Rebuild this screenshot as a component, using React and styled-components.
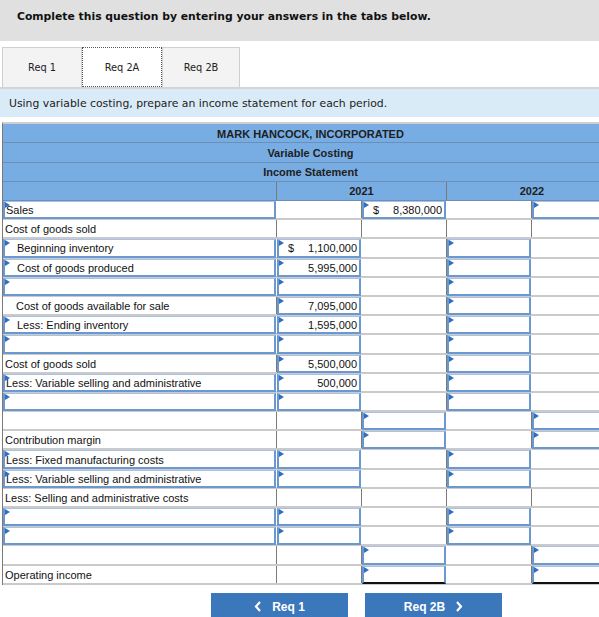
import React from "react";
import styled, { createGlobalStyle } from "styled-components";

const GlobalStyle = createGlobalStyle`
  html, body {
    margin: 0;
    padding: 0;
    background: #fff;
    overflow: hidden;
  }
  body {
    width: 599px;
    font-family: "Liberation Sans", Arial, sans-serif;
  }
`;

const Page = styled.div`
  width: 620px;
`;

const Banner = styled.div`
  height: 41px;
  width: 599px;
  background: #e0e0e0;
  display: flex;
  align-items: center;
  padding-left: 17px;
  box-sizing: border-box;
  font-family: "DejaVu Sans", Verdana, sans-serif;
  font-weight: bold;
  font-size: 10.8px;
  color: #111;
  padding-bottom: 8px;
`;

const Tabs = styled.div`
  display: flex;
  margin-top: 6px;
  padding-left: 2px;
  height: 40px;
`;

const Tab = styled.div`
  width: ${(p) => p.w}px;
  box-sizing: border-box;
  display: flex;
  align-items: center;
  justify-content: center;
  font-family: "DejaVu Sans", Verdana, sans-serif;
  font-size: 9.8px;
  color: #222;
  background: ${(p) => (p.active ? "#fff" : "#f3f3f3")};
  border: 1px ${(p) => (p.active ? "dotted #555" : "solid #cfcfcf")};
  border-bottom: ${(p) => (p.active ? "1px dotted #555" : "none")};
`;

const Instruction = styled.div`
  width: 599px;
  height: 30px;
  box-sizing: border-box;
  background: #daebf8;
  border-top: 2px solid #d4d4d4;
  display: flex;
  align-items: center;
  padding-left: 9px;
  font-family: "DejaVu Sans", Verdana, sans-serif;
  font-size: 10.85px;
  color: #222;
`;

const Table = styled.div`
  margin: 5px 0 0 2px;
  width: 615px;
  border-top: 2px solid #cfcfcf;
  border-left: 1px solid #7a7a7a;
  font-size: 11px;
  color: #111;
`;

const HeadRow = styled.div`
  height: 19.25px;
  box-sizing: border-box;
  background: #78ade3;
  border-bottom: 1px solid #6a90b8;
  display: grid;
  grid-template-columns: ${(p) => p.cols || "1fr"};
  font-weight: bold;
  color: #1e1e1e;
`;

const HeadCell = styled.div`
  display: flex;
  align-items: center;
  justify-content: center;
  padding-top: 1px;
  border-right: ${(p) => (p.divider ? "1px solid #7a7a7a" : "none")};
`;

const Row = styled.div`
  height: 19.2px;
  box-sizing: border-box;
  display: grid;
  grid-template-columns: 274px 85px 85px 85px 85px;
  border-bottom: 2px solid #cacaca;
`;

const Cell = styled.div`
  position: relative;
  box-sizing: border-box;
  border-right: 1px solid #7a7a7a;
  display: flex;
  align-items: center;
  padding: 1px 2px 0 1px;
  ${(p) =>
    p.input &&
    `
    border-left: 2px solid #6b98cf;
    border-top: 1.5px solid #a7c2e6;
    border-bottom: 2px solid #6b98cf;
    border-right: 2px solid #6b98cf;
    margin-right: 1px;
    margin-bottom: -1px;
    padding-left: 0;
  `}
  ${(p) => p.last && "border-bottom: 2px solid #111;"}
`;

const LabelText = styled.span`
  padding-left: ${(p) => (p.indent ? 12 : 1)}px;
  white-space: nowrap;
`;

const Flag = styled.span`
  position: absolute;
  left: 0;
  top: 0;
  width: 0;
  height: 0;
  border-top: 3px solid transparent;
  border-bottom: 3px solid transparent;
  border-left: 5px solid #2f6fc2;
`;

const Amount = styled.div`
  flex: 1;
  display: flex;
  justify-content: space-between;
  padding: 0 0 0 9px;
`;

const Nav = styled.div`
  display: flex;
  gap: 17px;
  margin: 8px 0 0 211px;
`;

const NavButton = styled.button`
  width: 137px;
  height: 30px;
  border: none;
  background: #3b77bb;
  color: #fff;
  font-family: "Liberation Sans", Arial, sans-serif;
  font-weight: bold;
  font-size: 12px;
  display: flex;
  justify-content: center;
  align-items: flex-start;
  padding-top: 7px;
  gap: 10px;
`;

const Chevron = ({ dir }) => (
  <svg width="8" height="11" viewBox="0 0 8 11" style={{ marginTop: 1 }}>
    <path
      d={dir === "left" ? "M6 1 L2 5.5 L6 10" : "M2 1 L6 5.5 L2 10"}
      fill="none"
      stroke="#fff"
      strokeWidth="2.2"
    />
  </svg>
);

// cells per row: [c1, c2, c3, c4]; null = plain, "in" = empty input, {v, d} = filled input
const rows = [
  { label: "Sales", li: true, cells: [null, { d: true, v: "8,380,000" }, null, "in"] },
  { label: "Cost of goods sold", cells: [null, null, null, null] },
  { label: "Beginning inventory", indent: true, li: true, cells: [{ d: true, v: "1,100,000" }, null, "in", null] },
  { label: "Cost of goods produced", indent: true, li: true, cells: [{ v: "5,995,000" }, null, "in", null] },
  { label: "", li: true, cells: ["in", null, "in", null] },
  { label: "Cost of goods available for sale", indent: true, cells: [{ v: "7,095,000" }, null, "in", null] },
  { label: "Less: Ending inventory", indent: true, li: true, cells: [{ v: "1,595,000" }, null, "in", null] },
  { label: "", li: true, cells: ["in", null, "in", null] },
  { label: "Cost of goods sold", cells: [{ v: "5,500,000" }, null, "in", null] },
  { label: "Less: Variable selling and administrative", li: true, cells: [{ v: "500,000" }, null, "in", null] },
  { label: "", li: true, cells: ["in", null, "in", null] },
  { label: "", cells: [null, "in", null, "in"] },
  { label: "Contribution margin", cells: [null, "in", null, "in"] },
  { label: "Less: Fixed manufacturing costs", li: true, cells: ["in", null, "in", null] },
  { label: "Less: Variable selling and administrative", li: true, cells: ["in", null, "in", null] },
  { label: "Less: Selling and administrative costs", cells: [null, null, null, null] },
  { label: "", li: true, cells: ["in", null, "in", null] },
  { label: "", li: true, cells: ["in", null, "in", null] },
  { label: "", cells: [null, "in", null, "in"] },
  { label: "Operating income", cells: [null, "in", null, "in"], last: true },
];

function ValueCell({ c, last }) {
  if (!c) return <Cell />;
  return (
    <Cell input last={last}>
      <Flag />
      {c !== "in" && (
        <Amount>
          <span>{c.d ? "$" : ""}</span>
          <span>{c.v}</span>
        </Amount>
      )}
    </Cell>
  );
}

export default function App() {
  return (
    <Page>
      <GlobalStyle />
      <Banner>Complete this question by entering your answers in the tabs below.</Banner>
      <Tabs>
        <Tab w={80}>Req 1</Tab>
        <Tab w={80} active>
          Req 2A
        </Tab>
        <Tab w={78}>Req 2B</Tab>
      </Tabs>
      <Instruction>Using variable costing, prepare an income statement for each period.</Instruction>
      <Table>
        <HeadRow>
          <HeadCell>MARK HANCOCK, INCORPORATED</HeadCell>
        </HeadRow>
        <HeadRow>
          <HeadCell>Variable Costing</HeadCell>
        </HeadRow>
        <HeadRow>
          <HeadCell>Income Statement</HeadCell>
        </HeadRow>
        <HeadRow cols="274px 170px 170px">
          <HeadCell divider />
          <HeadCell divider>2021</HeadCell>
          <HeadCell>2022</HeadCell>
        </HeadRow>
        {rows.map((r, i) => (
          <Row key={i}>
            {r.li ? (
              <Cell input>
                <Flag />
                <LabelText indent={r.indent}>{r.label}</LabelText>
              </Cell>
            ) : (
              <Cell>
                <LabelText indent={r.indent}>{r.label}</LabelText>
              </Cell>
            )}
            {r.cells.map((c, j) => (
              <ValueCell key={j} c={c} last={r.last} />
            ))}
          </Row>
        ))}
      </Table>
      <Nav>
        <NavButton>
          <Chevron dir="left" />
          Req 1
        </NavButton>
        <NavButton>
          Req 2B
          <Chevron dir="right" />
        </NavButton>
      </Nav>
    </Page>
  );
}
